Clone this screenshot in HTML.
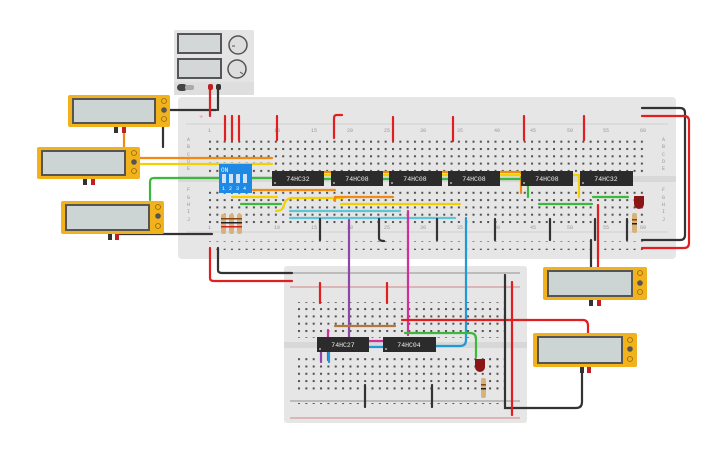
<!DOCTYPE html>
<html><head><style>
html,body{margin:0;padding:0;background:#fff;width:725px;height:453px;overflow:hidden}
svg{display:block}
text{font-family:"Liberation Mono",monospace}
</style></head><body>
<svg width="725" height="453" viewBox="0 0 725 453" xmlns="http://www.w3.org/2000/svg">
<defs>
<pattern id="h" x="208.5" y="0" width="7.32" height="7.3" patternUnits="userSpaceOnUse"><rect x="0.5" y="0.5" width="2" height="2" fill="#505050"/></pattern>
<pattern id="h2" x="297.5" y="0" width="7.35" height="7.3" patternUnits="userSpaceOnUse"><rect x="0.5" y="0.5" width="2" height="2" fill="#505050"/></pattern>
</defs>

<rect x="178" y="97" width="498" height="162" rx="4" fill="#e6e6e6"/>
<rect x="178" y="176" width="498" height="6" fill="#d8d8d8"/>
<line x1="186" y1="124" x2="668" y2="124" stroke="#d0d0d0"/>
<line x1="186" y1="232" x2="668" y2="232" stroke="#d0d0d0"/>
<rect x="208" y="106" width="436" height="3" fill="url(#h)"/>
<rect x="208" y="114" width="436" height="3" fill="url(#h)"/>
<rect x="208" y="136" width="436" height="35" fill="url(#h)" transform="translate(0,1.5)"/>
<rect x="208" y="187" width="436" height="35" fill="url(#h)" transform="translate(0,1.5)"/>
<rect x="208" y="239" width="436" height="3" fill="url(#h)"/>
<rect x="208" y="247" width="436" height="3" fill="url(#h)"/>
<g font-size="5" fill="#999">
<text x="187" y="141">A</text><text x="187" y="148">B</text><text x="187" y="156">C</text><text x="187" y="163">D</text><text x="187" y="170">E</text>
<text x="187" y="191">F</text><text x="187" y="199">G</text><text x="187" y="206">H</text><text x="187" y="213">I</text><text x="187" y="221">J</text>
<text x="662" y="141">A</text><text x="662" y="148">B</text><text x="662" y="156">C</text><text x="662" y="163">D</text><text x="662" y="170">E</text>
<text x="662" y="191">F</text><text x="662" y="199">G</text><text x="662" y="206">H</text><text x="662" y="213">I</text><text x="662" y="221">J</text>
<text x="208" y="132">1</text><text x="274" y="132">10</text><text x="311" y="132">15</text><text x="347" y="132">20</text><text x="384" y="132">25</text><text x="420" y="132">30</text><text x="457" y="132">35</text><text x="494" y="132">40</text><text x="530" y="132">45</text><text x="567" y="132">50</text><text x="603" y="132">55</text><text x="640" y="132">60</text>
<text x="208" y="229">1</text><text x="274" y="229">10</text><text x="311" y="229">15</text><text x="347" y="229">20</text><text x="384" y="229">25</text><text x="420" y="229">30</text><text x="457" y="229">35</text><text x="494" y="229">40</text><text x="530" y="229">45</text><text x="567" y="229">50</text><text x="603" y="229">55</text><text x="640" y="229">60</text>
</g>
<text x="199" y="119" font-size="7" fill="#e88">+</text>

<rect x="284" y="266" width="243" height="157" rx="3" fill="#e6e6e6"/>
<rect x="284" y="342" width="243" height="6" fill="#d8d8d8"/>
<line x1="290" y1="273" x2="520" y2="273" stroke="#777" stroke-width="0.8"/>
<line x1="290" y1="287" x2="520" y2="287" stroke="#c66" stroke-width="0.8"/>
<line x1="290" y1="401" x2="520" y2="401" stroke="#777" stroke-width="0.8"/>
<line x1="290" y1="418" x2="520" y2="418" stroke="#c66" stroke-width="0.8"/>
<rect x="297" y="274" width="216" height="3" fill="url(#h2)" transform="translate(0,0.5)"/>
<rect x="297" y="282" width="216" height="3" fill="url(#h2)"/>
<rect x="297" y="301" width="216" height="36" fill="url(#h2)" transform="translate(0,1)"/>
<rect x="297" y="355" width="216" height="35" fill="url(#h2)"/>
<rect x="297" y="403" width="216" height="3" fill="url(#h2)"/>
<rect x="297" y="412" width="216" height="3" fill="url(#h2)"/>
<rect x="297" y="296" width="216" height="2" fill="url(#h2)" opacity="0.3"/>
<rect x="297" y="392" width="216" height="2" fill="url(#h2)" opacity="0.3"/>

<rect x="174" y="30" width="80" height="65" rx="2" fill="#e4e4e4"/>
<rect x="177" y="33" width="45" height="21" fill="#555"/><rect x="179" y="35" width="41" height="17" fill="#d3d7d7"/>
<rect x="177" y="58" width="45" height="21" fill="#555"/><rect x="179" y="60" width="41" height="17" fill="#d3d7d7"/>
<circle cx="238" cy="45" r="9" fill="#ddd" stroke="#555" stroke-width="1.5"/>
<circle cx="237" cy="69" r="9" fill="#ddd" stroke="#555" stroke-width="1.5"/>
<line x1="232" y1="46" x2="235" y2="46" stroke="#555"/><line x1="240" y1="72" x2="243" y2="74" stroke="#555"/>
<rect x="174" y="82" width="80" height="13" fill="#dedede"/>
<rect x="177" y="84" width="10" height="7" rx="3.5" fill="#444"/><rect x="185" y="85" width="9" height="5" rx="2" fill="#aaa"/>

<g fill="none" stroke-width="2.2" stroke-linecap="round">
<path d="M170 110 H216 M218 88 V110" stroke="#333"/>
<path d="M210 88 V116" stroke="#e02020"/>
<path d="M225 116V140 M232 116V140 M239 116V140 M277 116V140 M393 117V141 M453 117V141 M524 116V140 M584 116V140" stroke="#e02020"/>
<path d="M334 138 V118 Q334 115 337 115 H342" stroke="#e02020"/>
<path d="M642 108 H680 Q685 108 685 113 V235 Q685 240 680 240 H642" stroke="#333"/>
<path d="M642 116 H684 Q689 116 689 121 V243 Q689 248 684 248 H642" stroke="#e02020"/>
<path d="M140 158 H272" stroke="#f08a10"/>
<path d="M140 164 H272" stroke="#f5d000"/>
<path d="M150 200 V182 Q150 178 154 178 H272" stroke="#3cb83c"/>
<path d="M324 172 H331 M383 172 H389 M442 172 H448 M500 172 H521 V193" stroke="#f08a10"/>
<path d="M324 175 H331 M383 175 H389 M442 175 H448 M500 175 H521 M573 175 H580 M579 175 V197" stroke="#f5d000"/>
<path d="M324 179 H331 M383 179 H389 M442 179 H448 M500 179 H521 M528 182 V197" stroke="#3cb83c"/>
<path d="M253 190 H335" stroke="#f08a10"/>
<path d="M232 197 H277" stroke="#f5d000"/>
<path d="M241 204 H281" stroke="#3cb83c"/>
<path d="M276 211 Q283 211 284 205 Q286 198 292 198 H343" stroke="#f5d000"/>
<path d="M335 201 V197 H393" stroke="#f08a10"/>
<path d="M341 204 H460" stroke="#f5d000"/>
<path d="M290 211 H400" stroke="#5ec4d8"/>
<path d="M290 218 H455" stroke="#5ec4d8"/>
<path d="M539 204 H592 M593 197 H628" stroke="#3cb83c"/>
<path d="M320 219V240 M379 219V238 Q379 241 384 241 M437 219V240 M495 219V240 M550 219V240 M595 219V240 M627 219V240" stroke="#333"/>
<path d="M598 205 V267" stroke="#e02020"/>
<path d="M591 240 V267" stroke="#333"/>
<path d="M116 234 H212" stroke="#333"/>
<path d="M210 248 V278 Q210 281 214 281 H292" stroke="#e02020"/>
<path d="M218 248 V270 Q218 273 222 273 H292" stroke="#333"/>
<path d="M163 127 V147" stroke="#333"/>
<path d="M124 127 V147" stroke="#f08a10"/>
<path d="M349 220 V339" stroke="#8e44ad"/>
<path d="M408 211 V335" stroke="#d0309a"/>
<path d="M466 218 V340 Q466 346 460 346 H435" stroke="#1e9ad6"/>
<path d="M335 326 H395" stroke="#b07840"/>
<path d="M320 283 V303 M387 283 V303" stroke="#e02020"/>
<path d="M405 333 H470 Q476 333 476 339 V357" stroke="#3cb83c"/>
<path d="M402 320 H583 Q588 320 588 326 V333" stroke="#e02020"/>
<path d="M505 275 V408 H528" stroke="#333"/>
<path d="M512 282 V415" stroke="#e02020"/>
<path d="M365 385 V407 M432 385 V407" stroke="#333"/>
<path d="M328 330 V338 M328 352 V360" stroke="#d0309a"/>
<path d="M369 341 H383" stroke="#d0309a"/>
<path d="M369 347 H383" stroke="#1e9ad6"/>
<path d="M321 352 V362" stroke="#8e44ad"/>
<path d="M329 352 V362" stroke="#1e9ad6"/>
<path d="M528 408 H576 Q582 408 582 402 V366" stroke="#333"/>
</g>

<g font-size="6.5" fill="#eee" text-anchor="middle">
<rect x="272" y="171" width="52" height="15" fill="#2b2b2b"/><text x="298" y="181">74HC32</text>
<rect x="331" y="171" width="52" height="15" fill="#2b2b2b"/><text x="357" y="181">74HC08</text>
<rect x="389" y="171" width="53" height="15" fill="#2b2b2b"/><text x="415" y="181">74HC08</text>
<rect x="448" y="171" width="52" height="15" fill="#2b2b2b"/><text x="474" y="181">74HC08</text>
<rect x="521" y="171" width="52" height="15" fill="#2b2b2b"/><text x="547" y="181">74HC08</text>
<rect x="580" y="171" width="53" height="15" fill="#2b2b2b"/><text x="606" y="181">74HC32</text>
<rect x="317" y="337" width="52" height="15" fill="#2b2b2b"/><text x="343" y="347">74HC27</text>
<rect x="383" y="337" width="53" height="15" fill="#2b2b2b"/><text x="409" y="347">74HC04</text>
</g>
<g fill="#ddd"><circle cx="275" cy="183" r="0.9"/><circle cx="334" cy="183" r="0.9"/><circle cx="392" cy="183" r="0.9"/><circle cx="451" cy="183" r="0.9"/><circle cx="524" cy="183" r="0.9"/><circle cx="583" cy="183" r="0.9"/><circle cx="320" cy="349" r="0.9"/><circle cx="386" cy="349" r="0.9"/></g>

<rect x="219" y="164" width="33" height="29" fill="#1e88e5"/>
<text x="221" y="172" font-size="6" fill="#fff">ON</text>
<g fill="#cfe3f8"><rect x="222" y="174" width="4" height="9"/><rect x="229" y="174" width="4" height="9"/><rect x="236" y="174" width="4" height="9"/><rect x="243" y="174" width="4" height="9"/></g>
<g font-size="5" fill="#fff"><text x="222" y="190">1</text><text x="229" y="190">2</text><text x="236" y="190">3</text><text x="243" y="190">4</text></g>

<g>
<rect x="221" y="214" width="5" height="20" rx="2" fill="#d7b27a"/><rect x="229" y="214" width="5" height="20" rx="2" fill="#d7b27a"/><rect x="237" y="214" width="5" height="20" rx="2" fill="#d7b27a"/>
<rect x="221" y="218" width="21" height="1.5" fill="#8b4513"/>
<rect x="221" y="222" width="21" height="1.5" fill="#222"/>
<rect x="221" y="226" width="21" height="1.5" fill="#d02020"/>
<rect x="632" y="213" width="5" height="20" rx="2" fill="#d7b27a"/><rect x="632" y="219" width="5" height="1.5" fill="#8b4513"/><rect x="632" y="223" width="5" height="1.5" fill="#222"/>
<rect x="481" y="378" width="5" height="20" rx="2" fill="#d7b27a"/><rect x="481" y="384" width="5" height="1.5" fill="#8b4513"/><rect x="481" y="388" width="5" height="1.5" fill="#222"/>
</g>
<path d="M634 196 h10 v8 a5 5 0 0 1 -10 0z" fill="#8b1515"/>
<path d="M475 359 h10 v8 a5 5 0 0 1 -10 0z" fill="#8b1515"/>

<g>
<rect x="68" y="95" width="102" height="32" rx="2" fill="#f2b21c"/><rect x="72" y="98" width="84" height="26" fill="#555"/><rect x="74" y="100" width="80" height="22" fill="#cdd4d4"/>
<rect x="37" y="147" width="103" height="32" rx="2" fill="#f2b21c"/><rect x="41" y="150" width="85" height="26" fill="#555"/><rect x="43" y="152" width="81" height="22" fill="#cdd4d4"/>
<rect x="61" y="201" width="103" height="33" rx="2" fill="#f2b21c"/><rect x="65" y="204" width="85" height="27" fill="#555"/><rect x="67" y="206" width="81" height="23" fill="#cdd4d4"/>
<rect x="543" y="267" width="104" height="33" rx="2" fill="#f2b21c"/><rect x="547" y="270" width="86" height="27" fill="#555"/><rect x="549" y="272" width="82" height="23" fill="#cdd4d4"/>
<rect x="533" y="333" width="104" height="34" rx="2" fill="#f2b21c"/><rect x="537" y="336" width="86" height="28" fill="#555"/><rect x="539" y="338" width="82" height="24" fill="#cdd4d4"/>
</g>
<g fill="none" stroke="#8a6a10" stroke-width="0.8">
<circle cx="164" cy="101" r="2.5"/><circle cx="164" cy="119" r="2.5"/>
<circle cx="134" cy="153" r="2.5"/><circle cx="134" cy="171" r="2.5"/>
<circle cx="158" cy="207" r="2.5"/><circle cx="158" cy="226" r="2.5"/>
<circle cx="640" cy="273" r="2.5"/><circle cx="640" cy="292" r="2.5"/>
<circle cx="630" cy="340" r="2.5"/><circle cx="630" cy="359" r="2.5"/>
</g>
<g fill="#555"><circle cx="164" cy="110" r="2.8"/><circle cx="134" cy="162" r="2.8"/><circle cx="158" cy="216" r="2.8"/><circle cx="640" cy="283" r="2.8"/><circle cx="630" cy="349" r="2.8"/></g>
<g>
<rect x="114" y="127" width="4" height="6" fill="#333"/><rect x="122" y="127" width="4" height="6" fill="#c02020"/>
<rect x="83" y="179" width="4" height="6" fill="#333"/><rect x="91" y="179" width="4" height="6" fill="#c02020"/>
<rect x="108" y="234" width="4" height="6" fill="#333"/><rect x="115" y="234" width="4" height="6" fill="#c02020"/>
<rect x="589" y="300" width="4" height="6" fill="#333"/><rect x="597" y="300" width="4" height="6" fill="#c02020"/>
<rect x="580" y="367" width="4" height="6" fill="#333"/><rect x="587" y="367" width="4" height="6" fill="#c02020"/>
<rect x="208" y="84" width="5" height="6" rx="2" fill="#c02020"/><rect x="216" y="84" width="5" height="6" rx="2" fill="#333"/>
</g>
</svg>
</body></html>
